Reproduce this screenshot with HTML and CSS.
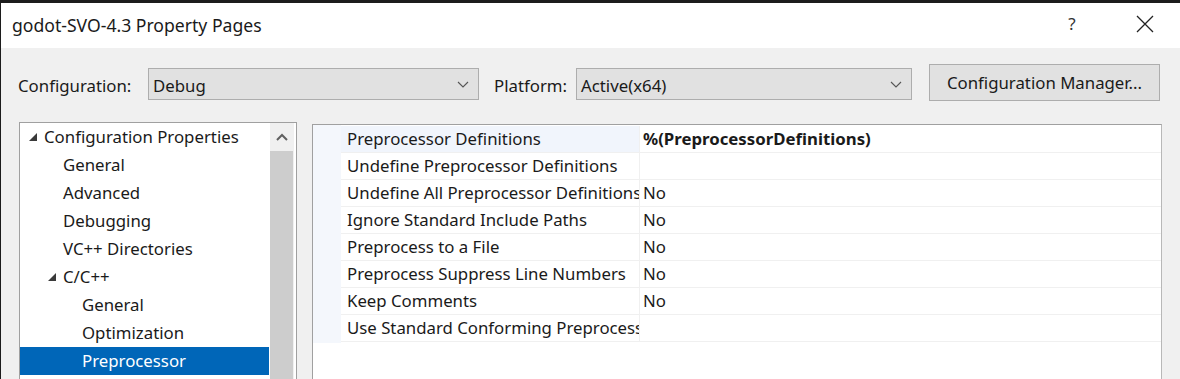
FILE: index.html
```html
<!DOCTYPE html>
<html>
<head>
<meta charset="utf-8">
<link rel="stylesheet" href="styles.css">
</head>
<body>
<div class="window">
  <div class="titlebar">
    <div class="title">godot-SVO-4.3 Property Pages</div>
    <div class="tb-btn help">?</div>
    <div class="tb-btn close">
      <svg width="18" height="18" viewBox="0 0 18 18"><path d="M1 1 L17 17 M17 1 L1 17" stroke="#222" stroke-width="1.3" fill="none"/></svg>
    </div>
  </div>
  <div class="toolbar">
    <span class="lbl cfg-lbl">Configuration:</span>
    <div class="combo cfg-combo"><span>Debug</span>
      <svg class="chev" width="12" height="7" viewBox="0 0 12 7"><path d="M1 1 L6 6 L11 1" stroke="#555" stroke-width="1.1" fill="none"/></svg>
    </div>
    <span class="lbl plat-lbl">Platform:</span>
    <div class="combo plat-combo"><span>Active(x64)</span>
      <svg class="chev" width="12" height="7" viewBox="0 0 12 7"><path d="M1 1 L6 6 L11 1" stroke="#555" stroke-width="1.1" fill="none"/></svg>
    </div>
    <div class="button">Configuration Manager...</div>
  </div>
  <div class="main">
    <div class="tree">
      <div class="tree-items">
        <div class="node l0"><span class="tri"></span>Configuration Properties</div>
        <div class="node l1">General</div>
        <div class="node l1">Advanced</div>
        <div class="node l1">Debugging</div>
        <div class="node l1">VC++ Directories</div>
        <div class="node l1b"><span class="tri"></span>C/C++</div>
        <div class="node l2">General</div>
        <div class="node l2">Optimization</div>
        <div class="node l2 sel">Preprocessor</div>
      </div>
      <div class="scrollbar">
        <div class="sb-up"><svg width="12" height="8" viewBox="0 0 12 8"><path d="M1 7 L6 2 L11 7" stroke="#606060" stroke-width="2" fill="none"/></svg></div>
        <div class="sb-thumb"></div>
      </div>
    </div>
    <div class="grid">
      <div class="gutter"></div>
      <div class="rows">
        <div class="row first"><div class="name">Preprocessor Definitions</div><div class="val bold">%(PreprocessorDefinitions)</div></div>
        <div class="row"><div class="name">Undefine Preprocessor Definitions</div><div class="val"></div></div>
        <div class="row"><div class="name">Undefine All Preprocessor Definitions</div><div class="val">No</div></div>
        <div class="row"><div class="name">Ignore Standard Include Paths</div><div class="val">No</div></div>
        <div class="row"><div class="name">Preprocess to a File</div><div class="val">No</div></div>
        <div class="row"><div class="name">Preprocess Suppress Line Numbers</div><div class="val">No</div></div>
        <div class="row"><div class="name">Keep Comments</div><div class="val">No</div></div>
        <div class="row"><div class="name">Use Standard Conforming Preprocessor</div><div class="val"></div></div>
      </div>
    </div>
  </div>
</div>
</body>
</html>
```
FILE: styles.css
```css
html, body {
  margin: 0;
  padding: 0;
  background: #1c1c1c;
  overflow: hidden;
}
.window {
  margin: 3px 0 0 1px;
  height: 376px;
  background: #f0f0f0;
  font-family: "Noto Sans", "Open Sans", sans-serif;
  font-size: 16.8px;
  color: #1a1a1a;
  overflow: hidden;
}
.titlebar {
  height: 45px;
  background: #ffffff;
  display: flex;
  align-items: center;
}
.title {
  flex: 1;
  padding-left: 11px;
  font-size: 17.6px;
  padding-bottom: 2px;
}
.tb-btn {
  display: flex;
  align-items: center;
  justify-content: center;
}
.help {
  width: 18px;
  margin-right: 55px;
  font-size: 17px;
  color: #333;
  padding-bottom: 4px;
}
.close {
  width: 18px;
  margin-right: 26px;
  padding-bottom: 4px;
}
.toolbar {
  display: flex;
  align-items: center;
  height: 73px;
  padding-left: 17px;
  padding-bottom: 1px;
  box-sizing: border-box;
}
.lbl {
  white-space: nowrap;
  padding-top: 3px;
}
.cfg-lbl { width: 130px; }
.plat-lbl { width: 82px; margin-left: 15px; }
.combo {
  height: 32px;
  box-sizing: border-box;
  background: #e1e1e1;
  border: 1px solid #adadad;
  display: flex;
  align-items: center;
  padding-left: 4px;
}
.combo span { flex: 1; padding-top: 3px; }
.chev { margin-right: 9px; }
.cfg-combo { width: 331px; }
.plat-combo { width: 336px; }
.button {
  margin-left: 17px;
  width: 231px;
  height: 37px;
  box-sizing: border-box;
  background: #e1e1e1;
  border: 1px solid #adadad;
  display: flex;
  align-items: center;
  justify-content: center;
  margin-top: -3px;
}
.main {
  display: flex;
  align-items: flex-start;
  padding-left: 18px;
}
.tree {
  width: 278px;
  height: 300px;
  box-sizing: border-box;
  border: 1px solid #a0a0a0;
  background: #ffffff;
  display: flex;
  margin-top: 1px;
}
.tree-items {
  width: 249px;
  padding-top: 0;
}
.node {
  height: 28px;
  line-height: 28px;
  white-space: nowrap;
  position: relative;
}
.l0 { padding-left: 24px; }
.l1 { padding-left: 43px; }
.l1b { padding-left: 43px; }
.l2 { padding-left: 62px; }
.tri {
  position: absolute;
  top: 10px;
  width: 0;
  height: 0;
  border-left: 8px solid transparent;
  border-bottom: 8px solid #3a3a3a;
}
.l0 .tri { left: 9px; }
.l1b .tri { left: 28px; }
.sel {
  background: #0066b8;
  color: #ffffff;
}
.scrollbar {
  width: 24px;
  margin-left: 1px;
  background: #f0f0f0;
  display: flex;
  flex-direction: column;
}
.sb-up {
  height: 28px;
  display: flex;
  align-items: center;
  justify-content: center;
}
.sb-thumb {
  flex: 1;
  background: #cdcdcd;
  margin-right: 1px;
}
.grid {
  margin-left: 15px;
  margin-top: 3px;
  width: 850px;
  height: 300px;
  box-sizing: border-box;
  border: 1px solid #a0a0a0;
  border-right-color: #b8b8b8;
  background: #ffffff;
  display: flex;
}
.gutter {
  width: 28px;
  height: 218px;
  background: #f4f7fc;
}
.rows {
  flex: 1;
  padding-top: 1px;
}
.row {
  display: flex;
  height: 27px;
  border-bottom: 1px solid #f0f0f0;
  box-sizing: border-box;
}
.row .name {
  width: 299px;
  padding-left: 6px;
  box-sizing: border-box;
  border-right: 1px solid #f0f0f0;
  white-space: nowrap;
  overflow: hidden;
  line-height: 25px;
}
.row.first .name {
  background: #f1f5fc;
}
.row .val {
  padding-left: 3px;
  line-height: 25px;
  white-space: nowrap;
}
.bold { font-weight: bold; }
```
